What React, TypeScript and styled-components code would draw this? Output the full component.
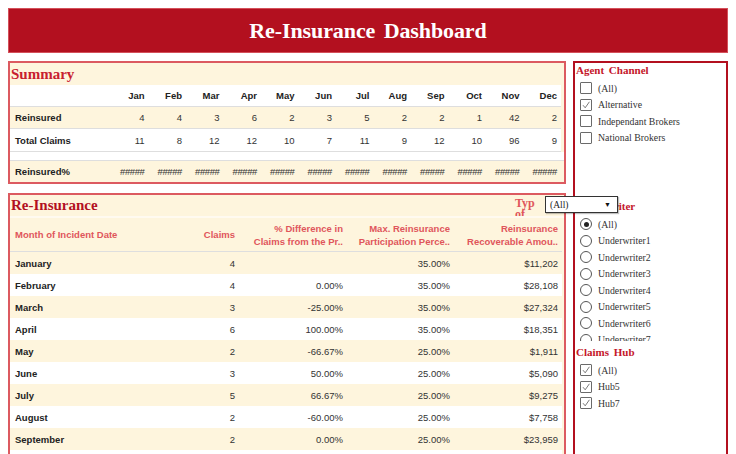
import React from 'react';
import styled, { createGlobalStyle } from 'styled-components';

const GlobalStyle = createGlobalStyle`
  html, body {
    margin: 0;
    padding: 0;
    background: #fff;
    overflow: hidden;
  }
  body {
    font-family: "Liberation Sans", Arial, sans-serif;
  }
`;

const RED = '#b3101f';
const PANEL_BORDER = '#dc5a60';
const CREAM = '#fef5dd';
const LINE = '#dedede';

const Page = styled.div`
  position: relative;
  width: 736px;
  height: 454px;
  padding: 8px;
  box-sizing: border-box;
  overflow: hidden;
`;

const Header = styled.header`
  height: 45px;
  background: ${RED};
  border: 1px solid #d4505a;
  box-sizing: border-box;
  display: flex;
  align-items: center;
  justify-content: center;
  margin-bottom: 8px;
`;

const Title = styled.h1`
  margin: 0;
  color: #fff;
  font-family: "Liberation Serif", "Times New Roman", serif;
  font-weight: bold;
  font-size: 22px;
  word-spacing: 3px;
  letter-spacing: -0.1px;
`;

const Main = styled.div`
  display: grid;
  grid-template-columns: 558px 155px;
  column-gap: 7px;
  align-items: start;
`;

const LeftColumn = styled.div`
  display: flex;
  flex-direction: column;
  gap: 9px;
`;

const Panel = styled.section`
  border: 2px solid ${PANEL_BORDER};
  background: ${CREAM};
`;

const PanelTitle = styled.div<{ $height: number; $color: string }>`
  height: ${p => p.$height}px;
  display: flex;
  align-items: center;
  padding-left: 1px;
  font-family: "Liberation Serif", "Times New Roman", serif;
  font-weight: bold;
  font-size: 15px;
  color: ${p => p.$color};
`;

/* ---------- Summary ---------- */

const SummaryGrid = styled.div`
  display: grid;
  grid-template-columns: 101px repeat(12, 1fr);
  padding-right: 3px;
  font-size: 9.5px;
  color: #333;
`;

const SummaryRow = styled.div<{ $bg: string; $height: number; $bottom?: boolean }>`
  display: contents;
  & > div {
    height: ${p => p.$height}px;
    background: ${p => p.$bg};
    border-bottom: ${p => (p.$bottom ? `1px solid ${LINE}` : 'none')};
    box-sizing: border-box;
  }
`;

const SumCell = styled.div<{ $label?: boolean; $bold?: boolean; $hash?: boolean }>`
  display: flex;
  align-items: center;
  justify-content: ${p => (p.$label ? 'flex-start' : 'flex-end')};
  padding: ${p => (p.$label ? '0 0 0 5px' : '0 4px 0 0')};
  font-weight: ${p => (p.$bold ? 'bold' : 'normal')};
  color: ${p => (p.$bold ? '#222' : '#333')};
  font-size: 9.5px;
  letter-spacing: ${p => (p.$hash ? '-0.4px' : '0')};
  white-space: nowrap;
`;

const Spacer = styled.div`
  grid-column: 1 / -1;
  height: 9px;
  background: #fff;
  border-bottom: 1px solid ${LINE};
  box-sizing: border-box;
  margin-right: -3px;
`;

/* ---------- Re-Insurance table ---------- */

const TableGrid = styled.div`
  display: grid;
  grid-template-columns: 185px 44px 108px 107px 108px;
  border-top: 2px solid #fffaf0;
`;

const HeadCell = styled.div<{ $align: 'left' | 'right' }>`
  height: 34px;
  display: flex;
  align-items: center;
  justify-content: ${p => (p.$align === 'left' ? 'flex-start' : 'flex-end')};
  text-align: ${p => p.$align};
  padding: ${p => (p.$align === 'left' ? '0 0 0 5px' : '0 4px 0 0')};
  font-size: 9.5px;
  font-weight: bold;
  line-height: 13px;
  color: #e0555b;
  background: ${CREAM};
  border-bottom: 1px solid ${LINE};
  box-sizing: border-box;
  white-space: nowrap;
`;

const DataCell = styled.div<{ $odd: boolean; $label?: boolean }>`
  height: 22px;
  display: flex;
  align-items: center;
  justify-content: ${p => (p.$label ? 'flex-start' : 'flex-end')};
  padding: ${p => (p.$label ? '0 0 0 5px' : '0 4px 0 0')};
  background: ${p => (p.$odd ? CREAM : '#fff')};
  font-size: 9.5px;
  font-weight: ${p => (p.$label ? 'bold' : 'normal')};
  color: ${p => (p.$label ? '#222' : '#333')};
  white-space: nowrap;
`;

const TableFiller = styled.div`
  grid-column: 1 / -1;
  height: 22px;
  background: #fff;
`;

/* ---------- Filters ---------- */

const FilterPanel = styled.aside`
  border: 2px solid ${RED};
  height: 420px;
  background: #fff;
  font-family: "Liberation Serif", "Times New Roman", serif;
`;

const FilterSection = styled.div<{ $height?: number; $top?: number }>`
  height: ${p => (p.$height ? `${p.$height}px` : 'auto')};
  margin-top: ${p => p.$top ?? 0}px;
  overflow: hidden;
`;

const FilterTitle = styled.div`
  height: 14px;
  display: flex;
  align-items: center;
  padding-left: 1px;
  font-weight: bold;
  font-size: 11px;
  word-spacing: 2px;
  color: #c4162a;
`;

const ItemList = styled.div<{ $height?: number; $top: number }>`
  margin-top: ${p => p.$top}px;
  height: ${p => (p.$height ? `${p.$height}px` : 'auto')};
  overflow: hidden;
`;

const Item = styled.div`
  height: 16.5px;
  display: flex;
  align-items: center;
  gap: 6px;
  padding-left: 5px;
  font-size: 9.8px;
  color: #333;
  white-space: nowrap;
`;

const Box = styled.span`
  width: 12px;
  height: 12px;
  box-sizing: border-box;
  border: 1px solid #6a6a6a;
  border-radius: 1px;
  display: flex;
  align-items: center;
  justify-content: center;
  background: #fff;
  flex: none;
`;

const Circle = styled.span`
  width: 12px;
  height: 12px;
  box-sizing: border-box;
  border: 1px solid #555;
  border-radius: 50%;
  display: flex;
  align-items: center;
  justify-content: center;
  background: #fff;
  flex: none;
`;

const Dot = styled.span`
  width: 5px;
  height: 5px;
  border-radius: 50%;
  background: #222;
`;

/* dropdown floating over the panels */
const FloatingFilter = styled.div`
  position: absolute;
  left: 513px;
  top: 196px;
  display: flex;
  align-items: flex-start;
  gap: 10px;
`;

const FloatingLabel = styled.div`
  width: 22px;
  height: 20px;
  overflow: hidden;
  font-family: "Liberation Serif", "Times New Roman", serif;
  font-weight: bold;
  font-size: 12px;
  line-height: 11px;
  color: #e0555b;
  padding-left: 2px;
  padding-top: 2px;
  box-sizing: border-box;
  white-space: normal;
`;

const Select = styled.div`
  width: 73px;
  height: 17px;
  box-sizing: border-box;
  border: 1px solid #333;
  background: #fff;
  display: flex;
  align-items: center;
  justify-content: space-between;
  padding: 0 6px 0 4px;
  font-family: "Liberation Serif", "Times New Roman", serif;
  font-size: 9.5px;
  color: #222;
  box-shadow: 1px 1px 1px rgba(0, 0, 0, 0.25);
`;

const Arrow = styled.span`
  font-size: 7px;
  color: #111;
`;

const Check = () => (
  <svg width="10" height="10" viewBox="0 0 10 10">
    <polyline points="2,5.2 4.2,7.8 8.4,1.8" fill="none" stroke="#6a6a6a" strokeWidth="0.9" />
  </svg>
);

const months = ['Jan', 'Feb', 'Mar', 'Apr', 'May', 'Jun', 'Jul', 'Aug', 'Sep', 'Oct', 'Nov', 'Dec'];
const reinsured = [4, 4, 3, 6, 2, 3, 5, 2, 2, 1, 42, 2];
const totalClaims = [11, 8, 12, 12, 10, 7, 11, 9, 12, 10, 96, 9];

const rows = [
  ['January', '4', '', '35.00%', '$11,202'],
  ['February', '4', '0.00%', '35.00%', '$28,108'],
  ['March', '3', '-25.00%', '35.00%', '$27,324'],
  ['April', '6', '100.00%', '35.00%', '$18,351'],
  ['May', '2', '-66.67%', '25.00%', '$1,911'],
  ['June', '3', '50.00%', '25.00%', '$5,090'],
  ['July', '5', '66.67%', '25.00%', '$9,275'],
  ['August', '2', '-60.00%', '25.00%', '$7,758'],
  ['September', '2', '0.00%', '25.00%', '$23,959'],
];

const agentChannels = [
  { label: '(All)', checked: false },
  { label: 'Alternative', checked: true },
  { label: 'Independant Brokers', checked: false },
  { label: 'National Brokers', checked: false },
];

const underwriters = ['(All)', 'Underwriter1', 'Underwriter2', 'Underwriter3', 'Underwriter4', 'Underwriter5', 'Underwriter6', 'Underwriter7', 'Underwriter8'];

const hubs = ['(All)', 'Hub5', 'Hub7'];

const App = () => {
  return (
    <Page>
      <GlobalStyle />
      <Header>
        <Title>Re-Insurance Dashboard</Title>
      </Header>

      <Main>
        <LeftColumn>
          <Panel>
            <PanelTitle $height={22} $color="#c8202f">Summary</PanelTitle>
            <SummaryGrid>
              <SummaryRow $bg="#fff" $height={22} $bottom>
                <SumCell $label />
                {months.map(m => (
                  <SumCell key={m} $bold>{m}</SumCell>
                ))}
              </SummaryRow>
              <SummaryRow $bg={CREAM} $height={22} $bottom>
                <SumCell $label $bold>Reinsured</SumCell>
                {reinsured.map((v, i) => (
                  <SumCell key={i}>{v}</SumCell>
                ))}
              </SummaryRow>
              <SummaryRow $bg="#fff" $height={23} $bottom>
                <SumCell $label $bold>Total Claims</SumCell>
                {totalClaims.map((v, i) => (
                  <SumCell key={i}>{v}</SumCell>
                ))}
              </SummaryRow>
              <Spacer />
              <SummaryRow $bg={CREAM} $height={21}>
                <SumCell $label $bold>Reinsured%</SumCell>
                {months.map(m => (
                  <SumCell key={m} $hash>#####</SumCell>
                ))}
              </SummaryRow>
            </SummaryGrid>
          </Panel>

          <Panel>
            <PanelTitle $height={21} $color={RED}>Re-Insurance</PanelTitle>
            <TableGrid>
              <HeadCell $align="left">Month of Incident Date</HeadCell>
              <HeadCell $align="right">Claims</HeadCell>
              <HeadCell $align="right">% Difference in<br />Claims from the Pr..</HeadCell>
              <HeadCell $align="right">Max. Reinsurance<br />Participation Perce..</HeadCell>
              <HeadCell $align="right">Reinsurance<br />Recoverable Amou..</HeadCell>
              {rows.map((r, i) =>
                r.map((c, j) => (
                  <DataCell key={`${i}-${j}`} $odd={i % 2 === 0} $label={j === 0}>
                    {c}
                  </DataCell>
                ))
              )}
              <TableFiller />
            </TableGrid>
          </Panel>
        </LeftColumn>

        <FilterPanel>
          <FilterSection $height={136}>
            <FilterTitle>Agent Channel</FilterTitle>
            <ItemList $top={3}>
              {agentChannels.map(a => (
                <Item key={a.label}>
                  <Box>{a.checked && <Check />}</Box>
                  {a.label}
                </Item>
              ))}
            </ItemList>
          </FilterSection>

          <FilterSection>
            <FilterTitle>Underwriter</FilterTitle>
            <ItemList $top={3} $height={125}>
              {underwriters.map((u, i) => (
                <Item key={u}>
                  <Circle>{i === 0 && <Dot />}</Circle>
                  {u}
                </Item>
              ))}
            </ItemList>
          </FilterSection>

          <FilterSection $top={4}>
            <FilterTitle>Claims Hub</FilterTitle>
            <ItemList $top={3}>
              {hubs.map(h => (
                <Item key={h}>
                  <Box><Check /></Box>
                  {h}
                </Item>
              ))}
            </ItemList>
          </FilterSection>
        </FilterPanel>
      </Main>

      <FloatingFilter>
        <FloatingLabel>Type of Reinsurance</FloatingLabel>
        <Select>
          (All)
          <Arrow>▼</Arrow>
        </Select>
      </FloatingFilter>
    </Page>
  );
};

export default App;
